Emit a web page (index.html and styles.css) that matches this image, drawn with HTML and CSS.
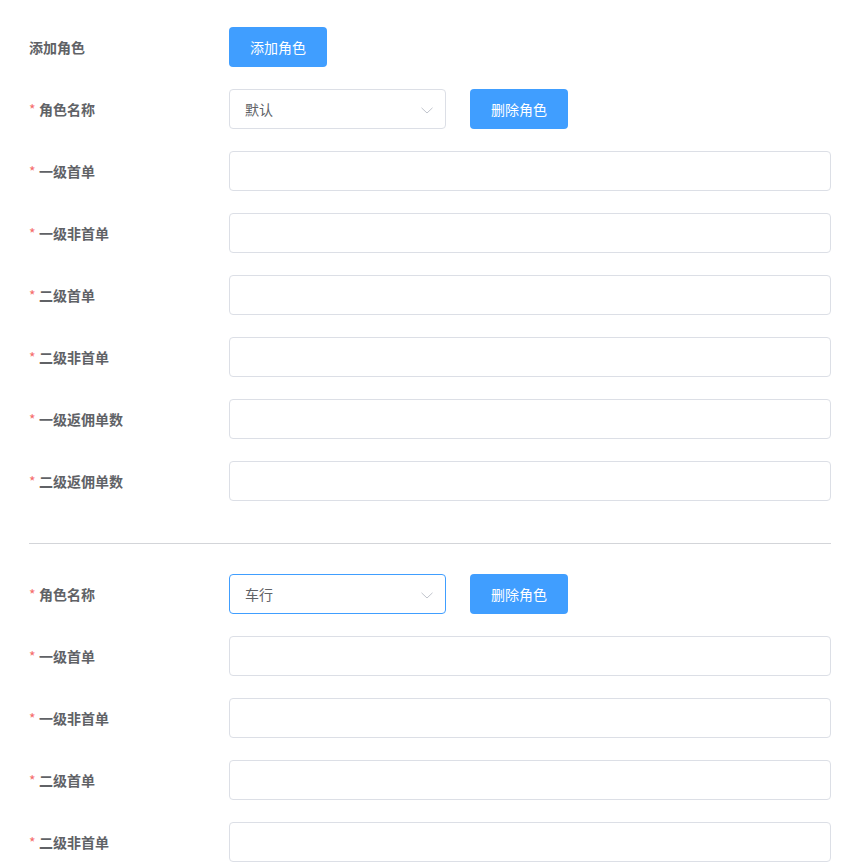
FILE: index.html
```html
<!DOCTYPE html>
<html lang="zh">
<head>
<meta charset="utf-8">
<link rel="stylesheet" href="styles.css">
</head>
<body>
<div class="form">
  <div class="row">
    <label class="label">添加角色</label>
    <div class="content"><button class="btn">添加角色</button></div>
  </div>

  <div class="group">
    <div class="row">
      <label class="label"><span class="req">*</span>角色名称</label>
      <div class="content">
        <div class="select"><span class="sel-text">默认</span>
          <svg class="arrow" width="12" height="7" viewBox="0 0 12 7"><path d="M0.5 0.8 L6 6 L11.5 0.8" fill="none" stroke="#c0c4cc" stroke-width="1"/></svg>
        </div>
        <button class="btn">删除角色</button>
      </div>
    </div>
    <div class="row"><label class="label"><span class="req">*</span>一级首单</label><div class="content"><input class="input" type="text"></div></div>
    <div class="row"><label class="label"><span class="req">*</span>一级非首单</label><div class="content"><input class="input" type="text"></div></div>
    <div class="row"><label class="label"><span class="req">*</span>二级首单</label><div class="content"><input class="input" type="text"></div></div>
    <div class="row"><label class="label"><span class="req">*</span>二级非首单</label><div class="content"><input class="input" type="text"></div></div>
    <div class="row"><label class="label"><span class="req">*</span>一级返佣单数</label><div class="content"><input class="input" type="text"></div></div>
    <div class="row"><label class="label"><span class="req">*</span>二级返佣单数</label><div class="content"><input class="input" type="text"></div></div>
  </div>

  <div class="divider"></div>

  <div class="group">
    <div class="row">
      <label class="label"><span class="req">*</span>角色名称</label>
      <div class="content">
        <div class="select focus"><span class="sel-text">车行</span>
          <svg class="arrow" width="12" height="7" viewBox="0 0 12 7"><path d="M0.5 0.8 L6 6 L11.5 0.8" fill="none" stroke="#c0c4cc" stroke-width="1"/></svg>
        </div>
        <button class="btn">删除角色</button>
      </div>
    </div>
    <div class="row"><label class="label"><span class="req">*</span>一级首单</label><div class="content"><input class="input" type="text"></div></div>
    <div class="row"><label class="label"><span class="req">*</span>一级非首单</label><div class="content"><input class="input" type="text"></div></div>
    <div class="row"><label class="label"><span class="req">*</span>二级首单</label><div class="content"><input class="input" type="text"></div></div>
    <div class="row"><label class="label"><span class="req">*</span>二级非首单</label><div class="content"><input class="input" type="text"></div></div>
  </div>
</div>
</body>
</html>
```

FILE: styles.css
```css
html, body {
  margin: 0;
  padding: 0;
  background: #fff;
  font-family: "Noto Sans CJK SC", "Noto Sans", sans-serif;
  font-size: 14px;
  overflow: hidden;
}
.form {
  padding: 27px 36px 0 29px;
  width: 802px;
}
.row {
  display: flex;
  align-items: center;
  height: 40px;
  margin-bottom: 22px;
}
.label {
  width: 200px;
  flex: none;
  color: #606266;
  font-weight: bold;
  font-size: 14px;
  line-height: 38px;
  display: flex;
  align-items: center;
}
.req {
  color: #f56c6c;
  font-weight: normal;
  margin-right: 4px;
  width: 6px;
}
.content {
  flex: 1;
  display: flex;
  align-items: center;
  gap: 24px;
}
.btn {
  width: 98px;
  height: 40px;
  border: none;
  border-radius: 4px;
  background: #409eff;
  color: #fff;
  font-family: inherit;
  font-size: 14px;
  padding: 0;
}
.select {
  box-sizing: border-box;
  width: 217px;
  height: 40px;
  border: 1px solid #dcdfe6;
  border-radius: 4px;
  display: flex;
  align-items: center;
  justify-content: space-between;
  padding: 0 12px 0 15px;
  color: #606266;
}
.select.focus {
  border-color: #409eff;
}
.arrow {
  display: block;
  margin-top: 2px;
}
.input {
  box-sizing: border-box;
  width: 602px;
  height: 40px;
  border: 1px solid #dcdfe6;
  border-radius: 4px;
  outline: none;
  padding: 0 15px;
  margin: 0;
  background: #fff;
}
.divider {
  height: 1px;
  background: #d3d5d9;
  margin: 42px 0 30px 0;
}
```
